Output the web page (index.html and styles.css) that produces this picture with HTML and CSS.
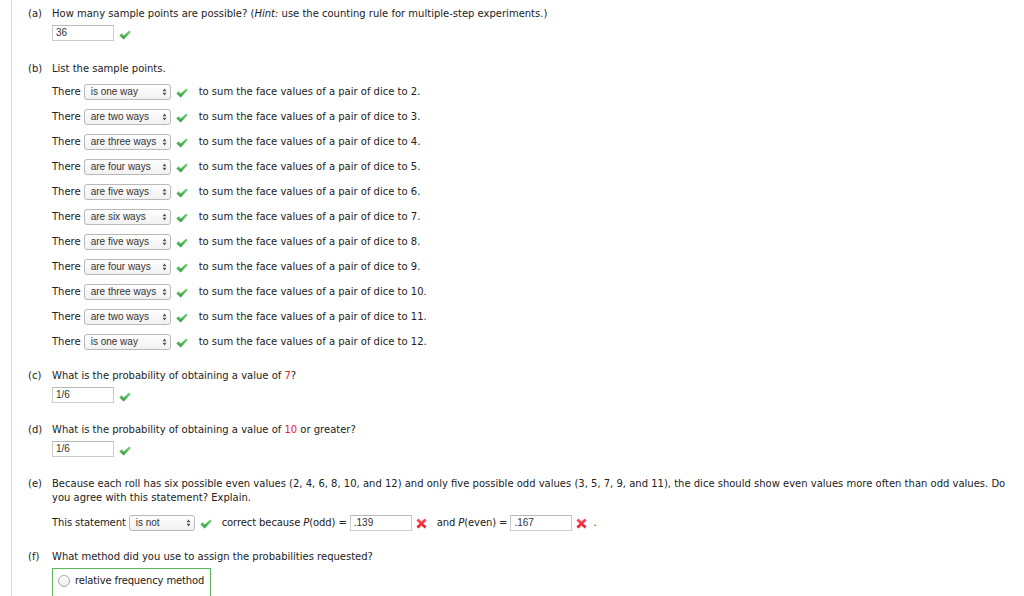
FILE: index.html
```html
<!DOCTYPE html>
<html>
<head>
<meta charset="utf-8">
<link rel="stylesheet" href="styles.css">
</head>
<body>
<div class="page">
  <svg width="0" height="0" class="defs">
    <defs>
      <linearGradient id="gck" x1="0" y1="0" x2="0" y2="1">
        <stop offset="0" stop-color="#7ad87a"/>
        <stop offset="1" stop-color="#2f9a3d"/>
      </linearGradient>
      <linearGradient id="gx" x1="0" y1="0" x2="0" y2="1">
        <stop offset="0" stop-color="#ff4f5a"/>
        <stop offset="1" stop-color="#e01e2b"/>
      </linearGradient>
      <symbol id="ck" viewBox="0 0 12 10">
        <path d="M0.3 5.5 L2.6 3.3 L4.7 5.4 L10.1 0.4 L11.8 2.1 L4.7 9.5 Z" fill="url(#gck)"/>
      </symbol>
      <symbol id="x" viewBox="0 0 12 12">
        <path d="M0.5 2.6 L2.6 0.5 L6 3.9 L9.4 0.5 L11.5 2.6 L8.1 6 L11.5 9.4 L9.4 11.5 L6 8.1 L2.6 11.5 L0.5 9.4 L3.9 6 Z" fill="url(#gx)"/>
      </symbol>
      <symbol id="ar" viewBox="0 0 6 10">
        <path d="M3 0.5 L5.5 4 L0.5 4 Z M3 9.5 L5.5 6 L0.5 6 Z" fill="#555"/>
      </symbol>
    </defs>
  </svg>

  <div class="q qa">
    <div class="lbl">(a)</div>
    <div class="body">
      <div class="stem">How many sample points are possible? (<i>Hint:</i> use the counting rule for multiple-step experiments.)</div>
      <div class="ans"><span class="inp">36</span><svg class="ck"><use href="#ck"/></svg></div>
    </div>
  </div>

  <div class="q qb">
    <div class="lbl">(b)</div>
    <div class="body">
      <div class="stem">List the sample points.</div>
      <div class="rows">
        <div class="row">There <span class="sel">is one way<svg class="ar"><use href="#ar"/></svg></span><svg class="ck"><use href="#ck"/></svg><span class="tail">to sum the face values of a pair of dice to 2.</span></div>
        <div class="row">There <span class="sel">are two ways<svg class="ar"><use href="#ar"/></svg></span><svg class="ck"><use href="#ck"/></svg><span class="tail">to sum the face values of a pair of dice to 3.</span></div>
        <div class="row">There <span class="sel">are three ways<svg class="ar"><use href="#ar"/></svg></span><svg class="ck"><use href="#ck"/></svg><span class="tail">to sum the face values of a pair of dice to 4.</span></div>
        <div class="row">There <span class="sel">are four ways<svg class="ar"><use href="#ar"/></svg></span><svg class="ck"><use href="#ck"/></svg><span class="tail">to sum the face values of a pair of dice to 5.</span></div>
        <div class="row">There <span class="sel">are five ways<svg class="ar"><use href="#ar"/></svg></span><svg class="ck"><use href="#ck"/></svg><span class="tail">to sum the face values of a pair of dice to 6.</span></div>
        <div class="row">There <span class="sel">are six ways<svg class="ar"><use href="#ar"/></svg></span><svg class="ck"><use href="#ck"/></svg><span class="tail">to sum the face values of a pair of dice to 7.</span></div>
        <div class="row">There <span class="sel">are five ways<svg class="ar"><use href="#ar"/></svg></span><svg class="ck"><use href="#ck"/></svg><span class="tail">to sum the face values of a pair of dice to 8.</span></div>
        <div class="row">There <span class="sel">are four ways<svg class="ar"><use href="#ar"/></svg></span><svg class="ck"><use href="#ck"/></svg><span class="tail">to sum the face values of a pair of dice to 9.</span></div>
        <div class="row">There <span class="sel">are three ways<svg class="ar"><use href="#ar"/></svg></span><svg class="ck"><use href="#ck"/></svg><span class="tail">to sum the face values of a pair of dice to 10.</span></div>
        <div class="row">There <span class="sel">are two ways<svg class="ar"><use href="#ar"/></svg></span><svg class="ck"><use href="#ck"/></svg><span class="tail">to sum the face values of a pair of dice to 11.</span></div>
        <div class="row">There <span class="sel">is one way<svg class="ar"><use href="#ar"/></svg></span><svg class="ck"><use href="#ck"/></svg><span class="tail">to sum the face values of a pair of dice to 12.</span></div>
      </div>
    </div>
  </div>

  <div class="q qc">
    <div class="lbl">(c)</div>
    <div class="body">
      <div class="stem">What is the probability of obtaining a value of <span class="red">7</span>?</div>
      <div class="ans"><span class="inp">1/6</span><svg class="ck"><use href="#ck"/></svg></div>
    </div>
  </div>

  <div class="q qd">
    <div class="lbl">(d)</div>
    <div class="body">
      <div class="stem">What is the probability of obtaining a value of <span class="red">10</span> or greater?</div>
      <div class="ans"><span class="inp">1/6</span><svg class="ck"><use href="#ck"/></svg></div>
    </div>
  </div>

  <div class="q qe">
    <div class="lbl">(e)</div>
    <div class="body">
      <div class="stem">Because each roll has six possible even values (2, 4, 6, 8, 10, and 12) and only five possible odd values (3, 5, 7, 9, and 11), the dice should show even values more often than odd values. Do you agree with this statement? Explain.</div>
      <div class="row erow"><span class="lead">This statement</span><span class="sel sel-short">is not<svg class="ar"><use href="#ar"/></svg></span><svg class="ck"><use href="#ck"/></svg><span class="mid">correct because <i>P</i>(odd) = </span><span class="inp">.139</span><svg class="xx"><use href="#x"/></svg><span class="mid">and <i>P</i>(even) = </span><span class="inp">.167</span><svg class="xx"><use href="#x"/></svg><span class="dot">.</span></div>
    </div>
  </div>

  <div class="q qf">
    <div class="lbl">(f)</div>
    <div class="body">
      <div class="stem">What method did you use to assign the probabilities requested?</div>
      <div class="choices">
        <div class="choice"><span class="radio"></span>relative frequency method</div>
      </div>
    </div>
  </div>
</div>
</body>
</html>
```
FILE: styles.css
```css
html, body {
  margin: 0;
  padding: 0;
  background: #fff;
  overflow: hidden;
}
body {
  font-family: "DejaVu Sans", Verdana, sans-serif;
  font-size: 10px;
  color: #222;
  width: 1024px;
  height: 596px;
}
.defs { position: absolute; }
.page {
  margin-left: 11px;
  border-left: 1px solid #d9d9d9;
  height: 596px;
  padding-left: 16px;
  padding-top: 7px;
  box-sizing: border-box;
}
.q {
  display: grid;
  grid-template-columns: 24px 1fr;
}
.lbl, .stem {
  line-height: 14px;
}
.stem { padding-right: 14px; }
.ans {
  display: flex;
  align-items: center;
  margin-top: 4px;
}
.inp {
  display: inline-block;
  box-sizing: border-box;
  width: 62px;
  height: 16px;
  border: 1px solid #ccc;
  border-top-color: #b8b8b8;
  font-family: "Liberation Sans", Arial, sans-serif;
  font-size: 10px;
  line-height: 14px;
  padding-left: 3px;
  color: #333;
}
.ck {
  width: 12px;
  height: 10px;
  margin-left: 5px;
  margin-top: 3px;
}
.xx {
  width: 11px;
  height: 11px;
  margin-left: 4px;
  margin-top: 2px;
}
.qb { margin-top: 21px; }
.rows { margin-top: 3px; }
.row {
  display: flex;
  align-items: center;
  height: 25px;
  white-space: nowrap;
}
.sel {
  display: inline-flex;
  align-items: center;
  justify-content: space-between;
  box-sizing: border-box;
  width: 87px;
  height: 16px;
  margin-left: 3px;
  border: 1px solid #b9b9b9;
  border-radius: 3px;
  background: linear-gradient(#fff, #f1f1f1);
  font-family: "Liberation Sans", Arial, sans-serif;
  font-size: 10px;
  color: #333;
  padding: 0 3px 0 6px;
}
.lead { letter-spacing: -0.1px; }
.sel-short { width: 66px; }
.ar {
  width: 5px;
  height: 8px;
}
.tail { margin-left: 11px; }
.qc { margin-top: 15px; }
.qd { margin-top: 20px; }
.qe { margin-top: 20px; }
.erow { margin-top: 5px; }
.mid { margin-left: 10px; margin-right: 3px; letter-spacing: -0.1px; }
.dot { margin-left: 6px; }
.qf { margin-top: 15px; }
.red { color: #e8232a; }
.choices {
  margin-top: 4px;
  width: 159px;
  box-sizing: border-box;
  border: 1px solid #5cb85c;
  border-bottom: none;
  height: 40px;
  padding: 5px 0 0 5px;
}
.choice {
  display: flex;
  align-items: center;
  line-height: 14px;
  letter-spacing: -0.15px;
}
.radio {
  width: 10px;
  height: 10px;
  border: 1px solid #aaa;
  border-radius: 50%;
  margin-right: 5px;
  background: linear-gradient(#fff, #eee);
}
```
